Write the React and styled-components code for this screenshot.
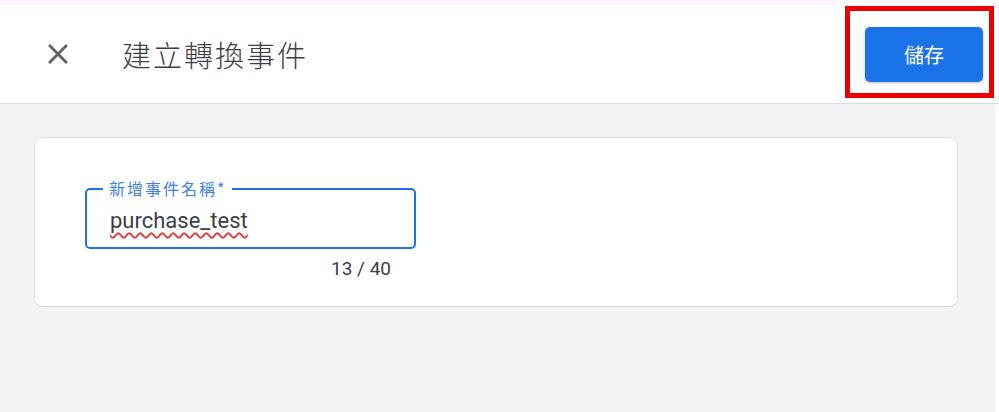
import React from "react";
import styled, { createGlobalStyle } from "styled-components";

const GlobalStyle = createGlobalStyle`
  html, body {
    margin: 0;
    padding: 0;
    background: #ffffff;
  }
  body {
    font-family: Roboto, "Noto Sans CJK TC", "Noto Sans", sans-serif;
  }
`;

const Shell = styled.div`
  width: 999px;
  height: 412px;
  display: flex;
  flex-direction: column;
  overflow: hidden;
  background: #ffffff;
`;

const TopStrip = styled.div`
  height: 5px;
  background: #fdf6fd;
`;

const Header = styled.header`
  position: relative;
  height: 98px;
  display: flex;
  align-items: center;
  padding: 0 16px 0 41px;
  background: #ffffff;
  border-bottom: 1px solid #dadce0;
`;

const IconButton = styled.button`
  width: 34px;
  height: 34px;
  padding: 0;
  border: none;
  background: none;
  display: flex;
  align-items: center;
  justify-content: center;
  color: #5f6368;
  cursor: pointer;
`;

const Title = styled.h1`
  margin: 0 0 0 47px;
  flex: 1;
  font-family: "Noto Sans CJK TC", sans-serif;
  font-weight: 300;
  font-size: 29px;
  letter-spacing: 2px;
  color: #3c4043;
`;

const SaveButton = styled.button`
  width: 118px;
  height: 55px;
  border: none;
  border-radius: 5px;
  background: #1a73e8;
  color: #ffffff;
  font-family: "Noto Sans CJK TC", sans-serif;
  font-size: 20px;
  font-weight: 400;
  box-shadow: 0 1px 3px rgba(60, 64, 67, 0.35);
  cursor: pointer;
`;

const Highlight = styled.div`
  position: absolute;
  left: 845px;
  top: 1px;
  width: 149px;
  height: 92px;
  box-sizing: border-box;
  border: 5px solid #ee0000;
  pointer-events: none;
`;

const Content = styled.main`
  flex: 1;
  margin-right: 4px;
  background: #f1f3f4;
  padding: 33px 37px 0 34px;
`;

const Card = styled.section`
  height: 170px;
  box-sizing: border-box;
  background: #ffffff;
  border: 1px solid #dadce0;
  border-radius: 9px;
  padding: 50px 50px 0 50px;
`;

const Field = styled.div`
  position: relative;
  width: 331px;
  height: 61px;
  box-sizing: border-box;
  border: 2px solid #1a73e8;
  border-radius: 5px;
  padding: 18px 0 0 23px;
`;

const Label = styled.span`
  position: absolute;
  left: 16px;
  top: -12px;
  padding: 0 6px 0 6px;
  background: #ffffff;
  font-family: "Noto Sans CJK TC", sans-serif;
  font-size: 16px;
  line-height: 20px;
  letter-spacing: 2px;
  color: #3b82ea;
`;

const Value = styled.span`
  font-family: Roboto, sans-serif;
  font-size: 22px;
  line-height: 26px;
  color: #3c4043;
  text-decoration: underline wavy #e53935;
  text-decoration-thickness: 1.5px;
  text-underline-offset: 4px;
`;

const Counter = styled.div`
  width: 331px;
  box-sizing: border-box;
  margin-top: 9px;
  padding-right: 25px;
  text-align: right;
  font-family: Roboto, sans-serif;
  font-size: 19px;
  line-height: 22px;
  color: #3c4043;
`;

function CloseIcon() {
  return (
    <svg width="34" height="34" viewBox="0 0 24 24" fill="currentColor">
      <path d="M19 6.41L17.59 5 12 10.59 6.41 5 5 6.41 10.59 12 5 17.59 6.41 19 12 13.41 17.59 19 19 17.59 13.41 12z" />
    </svg>
  );
}

export default function App() {
  const value = "purchase_test";
  const max = 40;

  return (
    <>
      <GlobalStyle />
      <Shell>
        <TopStrip />
        <Header>
          <IconButton aria-label="關閉">
            <CloseIcon />
          </IconButton>
          <Title>建立轉換事件</Title>
          <SaveButton>儲存</SaveButton>
          <Highlight />
        </Header>
        <Content>
          <Card>
            <Field>
              <Label>新增事件名稱*</Label>
              <Value>{value}</Value>
            </Field>
            <Counter>
              {value.length} / {max}
            </Counter>
          </Card>
        </Content>
      </Shell>
    </>
  );
}
